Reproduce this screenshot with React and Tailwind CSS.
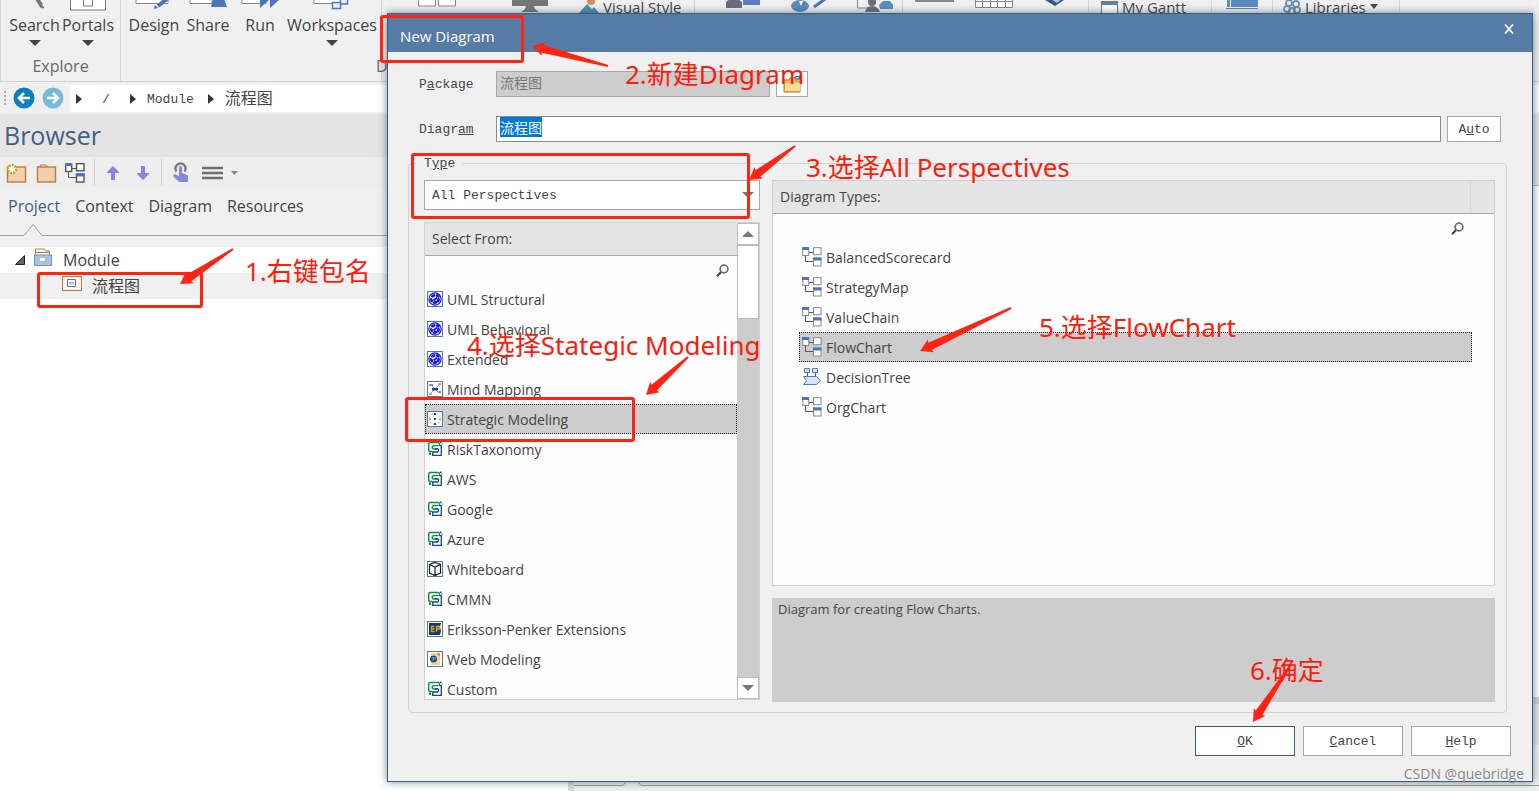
import React, { useEffect, useRef, useState } from "react";

const perspectives = [
  { name: "UML Structural", icon: "uml" },
  { name: "UML Behavioral", icon: "uml" },
  { name: "Extended", icon: "uml" },
  { name: "Mind Mapping", icon: "mind" },
  { name: "Strategic Modeling", icon: "strategic" },
  { name: "RiskTaxonomy", icon: "mdg" },
  { name: "AWS", icon: "mdg" },
  { name: "Google", icon: "mdg" },
  { name: "Azure", icon: "mdg" },
  { name: "Whiteboard", icon: "cube" },
  { name: "CMMN", icon: "mdg" },
  { name: "Eriksson-Penker Extensions", icon: "ep" },
  { name: "Web Modeling", icon: "web" },
  { name: "Custom", icon: "mdg" },
];

const diagramTypes = [
  "BalancedScorecard",
  "StrategyMap",
  "ValueChain",
  "FlowChart",
  "DecisionTree",
  "OrgChart",
];

const notes = [
  { text: "1.右键包名", place: "left-[245px] top-[253px]" },
  { text: "2.新建Diagram", place: "left-[625px] top-[56px]" },
  { text: "3.选择All Perspectives", place: "left-[806px] top-[149px]" },
  { text: "4.选择Stategic Modeling", place: "left-[467px] top-[327px]" },
  { text: "5.选择FlowChart", place: "left-[1039px] top-[309px]" },
  { text: "6.确定", place: "left-[1250px] top-[652px]" },
];

const frames = [
  "left-[37px] top-[272px] w-[166px] h-[36px]",
  "left-[380px] top-[15px] w-[144px] h-[48px]",
  "left-[411px] top-[153px] w-[339px] h-[66px]",
  "left-[405px] top-[397px] w-[230px] h-[45px]",
];

// tail x, tail y, tip x, tip y
const arrows = [
  [233, 249, 180, 284],
  [608, 66, 532, 46],
  [795, 146, 749, 180],
  [688, 357, 646, 395],
  [1011, 308, 920, 351],
  [1290, 666, 1253, 722],
];

function arrowPoints([x1, y1, x2, y2]) {
  const len = Math.hypot(x2 - x1, y2 - y1);
  const ux = (x2 - x1) / len;
  const uy = (y2 - y1) / len;
  const at = (back, side) => `${x2 - ux * back - uy * side},${y2 - uy * back + ux * side}`;
  return [
    at(len, 1),
    at(11, 4),
    at(12, 7),
    at(0, 0),
    at(12, -7),
    at(11, -4),
    at(len, -1),
  ].join(" ");
}

function Caret({ className = "" }) {
  return (
    <svg viewBox="0 0 12 6" className={`h-[6px] w-[12px] ${className}`}>
      <path d="M0 0h12L6 6z" fill="currentColor" />
    </svg>
  );
}

function SideCaret() {
  return (
    <svg viewBox="0 0 6 10" className="h-[10px] w-[6px] shrink-0">
      <path d="M0 0l6 5-6 5z" fill="#333" />
    </svg>
  );
}

function SearchIcon() {
  return (
    <svg viewBox="0 0 13 13" className="h-[13px] w-[13px] shrink-0" fill="none">
      <circle cx="8" cy="5" r="3.9" stroke="#6e6e6e" strokeWidth="1.7" />
      <path d="M5 8L1 12.2" stroke="#4a4a4a" strokeWidth="2.2" />
    </svg>
  );
}

function PerspectiveIcon({ type }) {
  const frame = <rect x="0.5" y="0.5" width="15" height="15" fill="#fff" stroke="#55779a" />;
  return (
    <svg viewBox="0 0 16 16" className="h-4 w-4 shrink-0" fill="none">
      {type === "uml" && (
        <>
          {frame}
          <circle cx="8" cy="8" r="6.1" stroke="#1414e6" strokeWidth="1.2" />
          <g fill="#1414e6">
            <ellipse cx="6.2" cy="4.8" rx="2.500" ry="1.5" transform="rotate(-25 6.2 4.8)" />
            <ellipse cx="10.8" cy="4.9" rx="1.500" ry="2.2" transform="rotate(-50 10.8 4.9)" />
            <ellipse cx="11.3" cy="9.200" rx="1.5" ry="2.4" transform="rotate(20 11.3 9.2)" />
            <ellipse cx="8" cy="11.500" rx="2.4" ry="1.500" transform="rotate(-15 8 11.5)" />
            <ellipse cx="4.500" cy="9.200" rx="1.4" ry="2.300" transform="rotate(-25 4.5 9.2)" />
            <path d="M6.500 9.500L10 6.500" stroke="#1414e6" strokeWidth="1.800" />
          </g>
        </>
      )}
      {type === "mind" && (
        <>
          {frame}
          <path d="M4 4l8 8M12 4l-8 8" stroke="#9aa7b5" />
          <path d="M2 3h4v2H2zM11 10h3v2h-3z" fill="#7d93b3" />
          <path d="M5 7h6v2.5H5z" fill="#0f4a85" />
          <path d="M11 2h3v2h-3zM2 12h3v2H2z" fill="#f3a63b" />
        </>
      )}
      {type === "strategic" && (
        <>
          {frame}
          <circle cx="8" cy="8" r="5.500" stroke="#a8b6c8" strokeDasharray="2 1" />
          <path d="M7 2h2v2H7zM7 7h2v2H7zM7 12h2v2H7z" fill="#24507f" />
          <path d="M2 7h2v2H2zM12 7h2v2h-2z" fill="#f3a63b" />
        </>
      )}
      {type === "mdg" && (
        <>
          <path d="M12.500 5V2.500l-1-1H2.700l-1 1v7l1 1H5" stroke="#0c8f43" strokeWidth="1.4" />
          <path d="M11.500 4.700H6.200l-1 1v1.300l1 1h4.600" stroke="#0c8f43" strokeWidth="1.3" />
          <path d="M2 11.500h2v2.500H2z" fill="#0c8f43" />
          <path d="M8 7.700h2.500l1 .8v1.500l-1 1H5.700v3.300h8.600V4.700h-2" stroke="#164a80" strokeWidth="1.3" />
          <path d="M13 .5h1.500v1.500H13zM14.500 2.500h1v1h-1z" fill="#164a80" />
        </>
      )}
      {type === "cube" && (
        <>
          {frame}
          <path d="M8 1.500l5.500 2v8.500L8 14.500 2.500 12V3.500zM2.500 3.500L8 6l5.500-2.500M8 6v8.500" stroke="#1c1c1c" strokeWidth="1.2" />
        </>
      )}
      {type === "ep" && (
        <>
          {frame}
          <path d="M2 2h12l-1 4 1 4-1 4H2z" fill="#0c3c70" />
          <path d="M7.500 5.500H4.500v5h3M4.500 8h3M9.500 11V5.500h3V8h-3" stroke="#f39a1c" strokeWidth="1.3" />
        </>
      )}
      {type === "web" && (
        <>
          {frame}
          <path d="M4 2h7l2 2v10H4z" fill="#fbd08d" />
          <path d="M10 2h3v3h-2z" fill="#f39a1c" />
          <circle cx="6.500" cy="8" r="3.500" fill="#1f5187" />
          <path d="M5 6.500l2 1-1 2M8 6v2" stroke="#8fb0d0" />
        </>
      )}
    </svg>
  );
}

function DiagramIcon({ dark }) {
  const line = dark ? "#555" : "#888";
  return (
    <svg viewBox="0 0 20 20" className="h-5 w-5 shrink-0" fill="none">
      <path d="M7 5.500h5M3.500 9v5.500H12" stroke="#555" />
      <g fill="#fff" stroke={line} strokeWidth={dark ? 1.4 : 1}>
        <rect x="0.7" y="1" width="6" height="7.500" />
        <rect x="11.500" y="0.7" width="7.500" height="7" />
        <rect x="11.500" y="11" width="7.500" height="8" />
      </g>
      <path d="M0 0h7v3H0zM11 10.500h8.500v3H11z" fill="#4f74c4" />
    </svg>
  );
}

function DecisionIcon() {
  return (
    <svg viewBox="0 0 20 20" className="h-5 w-5 shrink-0" fill="none">
      <path d="M5.500 5v4M13.500 5v4" stroke="#555" />
      <g fill="#dfe1fb" stroke="#5478c0">
        <path d="M2.500 1.500h5v4h-5zM10.500 1.500h5v4h-5z" />
        <path d="M1.500 9.500h13l4 4-4 4h-13l3-4z" />
      </g>
    </svg>
  );
}

function RibbonIcon({ type }) {
  return (
    <svg viewBox="0 0 40 13" className="h-[13px] w-10 shrink-0" fill="none">
      {type === "search" && <path d="M21 -3l5 8q1 2 2 1" stroke="#777" strokeWidth="4" />}
      {type === "portals" && (
        <>
          <path d="M2.500 -1v11h35V-1z" fill="#fff" stroke="#777" />
          <path d="M15.500 -1v7h9v-7" stroke="#777" />
        </>
      )}
      {type === "design" && (
        <>
          <path d="M2 -1v4.500h32V-1" fill="#fff" stroke="#888" />
          <path d="M34 -2L24 6" stroke="#4a76b8" strokeWidth="4" />
          <path d="M20 9l1-4 3 3z" fill="#4a76b8" />
        </>
      )}
      {type === "share" && (
        <>
          <path d="M2 -1v4.500h22V-1" fill="#fff" stroke="#888" />
          <path d="M25 -1h11l3 8H23z" fill="#4a76b8" />
        </>
      )}
      {type === "run" && (
        <>
          <path d="M2 -1v4.500h24V-1" fill="#fff" stroke="#888" />
          <path d="M20 0h9l-9 8zM30 0h9l-9 8z" fill="#4a76b8" />
        </>
      )}
      {type === "workspaces" && (
        <>
          <path d="M2 -1v4.500h32V-1" fill="#fff" stroke="#888" />
          <path d="M20.500 2.500h8v6h-8zM28.500 -1h7v5h-7z" fill="#e6effa" stroke="#4a76b8" strokeWidth="1.4" />
        </>
      )}
      {type === "windows" && (
        <path d="M.5 -1h17v7H.5zM20.500 -1h17v7h-17z" fill="#fff" stroke="#888" />
      )}
      {type === "monitor" && <path d="M2 0h36v6H24l1 3 4 3H11l4-3 1-3H2z" fill="#777" />}
      {type === "picture" && (
        <>
          <circle cx="22" cy="1" r="4" fill="#d58a5f" />
          <path d="M10 13l8-9 5 5 2-2 5 6z" fill="#4d93ab" />
        </>
      )}
      {type === "people" && (
        <>
          <path d="M3 8V2l4-3h8l4 3v6z" fill="#6e6a80" />
          <path d="M20 5V-1h17v6z" fill="#5b82bd" />
        </>
      )}
      {type === "edit" && (
        <>
          <ellipse cx="11" cy="6" rx="9" ry="6" fill="#5b8cb8" />
          <path d="M10 1l2 5 2-5z" fill="#fff" />
          <path d="M36 -1L25 7" stroke="#4a76b8" strokeWidth="3" />
        </>
      )}
      {type === "team" && (
        <>
          <path d="M2.500 -1v9h12" stroke="#888" />
          <circle cx="17" cy="2" r="4" fill="#6e6a80" />
          <path d="M10 12q1-6 7-6t8 6z" fill="#6e6a80" />
          <path d="M25 9l-1-4 4-4h7l3 4v4z" fill="#5b8cc0" />
        </>
      )}
      {type === "bar" && <path d="M0 1h39" stroke="#888" strokeWidth="2" />}
      {type === "calendar" && (
        <path d="M.5 -1v8.500h37V-1M.5 1.500h37M7.500 0v7M15.500 0v7M22.500 0v7M30.500 0v7" stroke="#888" fill="#fff" />
      )}
      {type === "gem" && (
        <>
          <path d="M10 0l10 6 9-6z" fill="#35577e" />
          <path d="M14 -2l8 5 5-4z" fill="#a7c4dd" />
        </>
      )}
      {type === "blue" && (
        <>
          <path d="M5 0h31v7H5z" fill="#5b8cc0" />
          <path d="M4 8.500h32" stroke="#5b8cc0" />
          <path d="M8.500 0v7" stroke="#fff" />
        </>
      )}
    </svg>
  );
}

function RibbonButton({ icon, label, menu, width }) {
  return (
    <button className={`flex flex-col items-center ${width}`}>
      <RibbonIcon type={icon} />
      <span className="text-[16px] leading-6">{label}</span>
      {menu && <Caret className="mt-[3px] text-[#444]" />}
    </button>
  );
}

function Ribbon() {
  return (
    <header className="flex h-[82px] overflow-hidden border-b border-[#d0d0d0] bg-[#f0f0f0]">
      <div className="flex w-[121px] shrink-0 flex-col border-x border-[#d4d4d4]">
        <div className="flex h-[54px] pl-[7px]">
          <RibbonButton icon="search" label="Search" menu width="w-[53px]" />
          <RibbonButton icon="portals" label="Portals" menu width="w-[54px]" />
        </div>
        <div className="text-center text-[16px] leading-6 text-[#666]">Explore</div>
      </div>
      <div className="flex w-[261px] shrink-0 flex-col border-r border-[#d4d4d4]">
        <div className="flex h-[54px] pl-[5px]">
          <RibbonButton icon="design" label="Design" width="w-[56px]" />
          <RibbonButton icon="share" label="Share" width="w-[52px]" />
          <RibbonButton icon="run" label="Run" width="w-[52px]" />
          <RibbonButton icon="workspaces" label="Workspaces" menu width="w-[92px]" />
        </div>
        <div className="pl-[255px] text-[16px] leading-6 text-[#666]">D</div>
      </div>
      <div className="flex w-[313px] shrink-0 items-start border-r border-[#d4d4d4] pl-9">
        <RibbonIcon type="windows" />
        <div className="ml-[52px] flex">
          <RibbonIcon type="monitor" />
        </div>
        <button className="ml-[19px] flex items-start">
          <RibbonIcon type="picture" />
          <span className="-ml-[6px] -mt-[5px] whitespace-nowrap text-[15px] leading-6">Visual Style</span>
        </button>
      </div>
      <div className="flex w-[208px] shrink-0 items-start gap-[26px] border-r border-[#d4d4d4] pl-7">
        <RibbonIcon type="people" />
        <RibbonIcon type="edit" />
        <RibbonIcon type="team" />
      </div>
      <div className="flex w-[186px] shrink-0 items-start gap-5 border-r border-[#d4d4d4] pl-3">
        <RibbonIcon type="bar" />
        <RibbonIcon type="calendar" />
        <RibbonIcon type="gem" />
      </div>
      <div className="w-[123px] shrink-0 border-r border-[#d4d4d4] pl-3">
        <button className="flex items-start gap-1">
          <svg viewBox="0 0 17 17" className="mt-px h-[17px] w-[17px]">
            <rect x="0.5" y="0.5" width="16" height="16" fill="#fff" stroke="#777" />
            <path d="M1 1h15v3H1z" fill="#5b82a8" />
          </svg>
          <span className="-mt-[5px] text-[15px] leading-6">My Gantt</span>
        </button>
      </div>
      <div className="flex w-[61px] shrink-0 justify-center border-r border-[#d4d4d4]">
        <RibbonIcon type="blue" />
      </div>
      <div className="w-[127px] shrink-0 border-r border-[#d4d4d4] pl-[10px]">
        <button className="flex items-start gap-1">
          <svg viewBox="0 0 18 16" className="h-4 w-[18px]" fill="none" stroke="#6f8fb0" strokeWidth="1.8">
            <circle cx="6" cy="3" r="3" />
            <circle cx="13" cy="4" r="3" />
            <circle cx="4" cy="9" r="3" />
            <circle cx="14" cy="10" r="3" />
            <circle cx="9" cy="11" r="3" />
          </svg>
          <span className="-mt-[5px] text-[15px] leading-6">Libraries</span>
          <svg viewBox="0 0 8 5" className="mt-1 h-[5px] w-2">
            <path d="M0 0h8L4 5z" fill="#444" />
          </svg>
        </button>
      </div>
    </header>
  );
}

function Breadcrumb() {
  return (
    <nav className="flex h-[33px] items-stretch border-b border-[#e5e5e5] bg-[#f0f0f0]">
      <div className="flex w-[70px] shrink-0 items-center pl-[4px]">
        <svg viewBox="0 0 2 14" className="h-[14px] w-[2px]">
          <path d="M1 0v14" stroke="#aaa" strokeWidth="2" strokeDasharray="2 2" />
        </svg>
        <button aria-label="Back" className="ml-[7px]">
          <svg viewBox="0 0 22 22" className="h-[22px] w-[22px]">
            <circle cx="11" cy="11" r="10.500" fill="#0a7fc1" />
            <path d="M17 11H6M11 6l-5 5 5 5" fill="none" stroke="#fff" strokeWidth="2.500" />
          </svg>
        </button>
        <button aria-label="Forward" className="ml-[7px]">
          <svg viewBox="0 0 22 22" className="h-[22px] w-[22px]">
            <circle cx="11" cy="11" r="10.500" fill="#79b9dc" />
            <path d="M5 11h11M11 6l5 5-5 5" fill="none" stroke="#fff" strokeWidth="2.500" />
          </svg>
        </button>
      </div>
      <div className="mb-[2px] mt-[3px] flex flex-1 items-center bg-white pl-[6px] font-['Liberation_Mono','Noto_Sans_CJK_SC',monospace] text-[13px]">
        <SideCaret />
        <span className="w-[48px] pt-[2px] text-center">/</span>
        <SideCaret />
        <a href="#module" className="ml-[11px] mr-[14px] pt-[2px]">Module</a>
        <SideCaret />
        <a href="#flow" className="ml-[11px] pt-[2px] text-[16px]">流程图</a>
      </div>
    </nav>
  );
}

function FolderIcon({ isNew }) {
  return (
    <svg viewBox="0 0 21 20" className="h-5 w-[21px]" fill="none">
      {!isNew && <path d="M3.500 5l1-3h6l1 3" fill="#fbe6d2" stroke="#b87c3c" />}
      <rect x="1.500" y="4" width="18" height="15" fill="#f4cfab" stroke="#b87c3c" strokeWidth="1.400" />
      {isNew && (
        <>
          <circle cx="6" cy="6" r="4" fill="#fff" stroke="#c4a814" strokeWidth="2.500" strokeDasharray="2 1" />
          <circle cx="6" cy="6" r="2.500" fill="#fff" />
        </>
      )}
    </svg>
  );
}

function MoveArrow({ down }) {
  return (
    <svg viewBox="0 0 12 14" className={down ? "h-[14px] w-3 rotate-180" : "h-[14px] w-3"}>
      <path d="M6 0l6 6v1H8v7H4V7H0V6z" fill="#8686de" />
    </svg>
  );
}

function Browser() {
  const tabs = ["Project", "Context", "Diagram", "Resources"];
  return (
    <aside className="flex w-[568px] shrink-0 flex-col bg-white">
      <h2 className="h-[42px] bg-[#e5e5e5] pl-[4px] text-[25px] leading-10 text-[#3e5f86]">Browser</h2>
      <div className="flex h-[31px] items-center bg-[#eeeeee] pl-[6px]">
        <button aria-label="New Model"><FolderIcon isNew /></button>
        <button aria-label="New Package" className="ml-[9px]"><FolderIcon /></button>
        <button aria-label="New Diagram" className="ml-2 mr-[9px]"><DiagramIcon dark /></button>
        <span className="h-[27px] w-px bg-[#d0d0d0]" />
        <button aria-label="Move Up" className="ml-3"><MoveArrow /></button>
        <button aria-label="Move Down" className="ml-[18px] mr-3"><MoveArrow down /></button>
        <span className="h-[27px] w-px bg-[#d0d0d0]" />
        <button aria-label="Touch" className="ml-[11px]">
          <svg viewBox="0 0 16 21" className="h-[21px] w-4" fill="none">
            <path d="M3.500 9.500A5 5 0 1 1 11.500 9.500" stroke="#777" strokeWidth="2.500" />
            <path d="M6 5q1.500-2 3 0v6l6 2.500V20H6L0 14l1.500-2L6 14z" fill="#8686de" />
          </svg>
        </button>
        <button aria-label="Options" className="ml-[13px] flex items-center gap-2 text-[#808080]">
          <svg viewBox="0 0 21 14" className="h-[14px] w-[21px]">
            <path d="M0 2h21M0 7h21M0 12h21" stroke="#707070" strokeWidth="2.400" />
          </svg>
          <svg viewBox="0 0 7 4" className="h-1 w-[7px]">
            <path d="M0 0h7L3.500 4z" fill="#888" />
          </svg>
        </button>
      </div>
      <div className="flex h-[36px] items-center gap-[15px] bg-[#f0f0f0] pl-2 text-[16px]">
        {tabs.map((tab) => (
          <button key={tab} className={tab === "Project" ? "text-[#3e5f86]" : ""}>{tab}</button>
        ))}
      </div>
      <div className="flex h-[23px] items-start bg-[#f0f0f0]">
        <span className="mt-[11px] h-px w-6 bg-[#a0a0a0]" />
        <svg viewBox="0 0 18 12" className="h-3 w-[18px]" fill="none">
          <path d="M0 11.500L9 .5l9 11" stroke="#a0a0a0" />
        </svg>
        <span className="mt-[11px] h-px flex-1 bg-[#a0a0a0]" />
      </div>
      <ul className="flex-1 text-[16px]">
        <li className="flex h-[26px] items-center pl-[15px]">
          <svg viewBox="0 0 10 10" className="h-[10px] w-[10px]">
            <path d="M9.500.5v9h-9z" fill="#666" stroke="#222" />
          </svg>
          <svg viewBox="0 0 18 18" className="mb-[6px] ml-[9px] h-[18px] w-[18px]" fill="none">
            <path d="M1.500 8V1h9l1 2h4v5" fill="#fff" stroke="#b87c3c" />
            <path d="M1.500 4.500h14" stroke="#b87c3c" />
            <rect x="0.5" y="7" width="17" height="10.500" fill="#a9c2dd" stroke="#6b95c0" />
            <path d="M6 10h5v3H6z" fill="#fff" />
          </svg>
          <span className="ml-[11px]">Module</span>
        </li>
        <li className="flex h-[26px] items-center bg-[#f0f0f0] pl-[62px]">
          <svg viewBox="0 0 20 15" className="mb-[5px] h-[15px] w-5" fill="none">
            <rect x="0.5" y="0.5" width="19" height="14" fill="#fdf3e8" stroke="#b87c3c" />
            <path d="M5.500 3.500h8v7h-8zM7 7h5" fill="#fff" stroke="#4f74c4" />
          </svg>
          <span className="ml-[10px]">流程图</span>
        </li>
      </ul>
    </aside>
  );
}

function Workspace() {
  return (
    <main className="flex min-w-0 flex-1 flex-col bg-[#f0f0f0]">
      <div className="h-[71px] shrink-0 border-b border-[#c0c0c0] bg-[#e5e5e5]" />
      <div className="min-h-[511px] flex-1 bg-white" />
      <div className="h-[7px] shrink-0 bg-[#d0d0d0]" />
      <div className="h-[41px] shrink-0 bg-[#e5e5e5]" />
      <div className="flex h-[46px] shrink-0 items-end pb-[5px]">
        <span className="h-px w-[49px] bg-[#999]" />
        <svg viewBox="0 0 18 12" className="h-3 w-[18px]" fill="none">
          <path d="M0 11.500L9 .5l9 11" stroke="#999" />
        </svg>
        <span className="h-px flex-1 bg-[#999]" />
      </div>
    </main>
  );
}

function PerspectiveList() {
  const [selected, setSelected] = useState("Strategic Modeling");
  return (
    <div className="flex h-[478px] border border-[#d0d0d0] bg-[#fdfdfd]">
      <div className="flex min-w-0 flex-1 flex-col overflow-hidden">
        <div className="h-[33px] shrink-0 border-b border-[#a8a8a8] bg-[#e5e5e5] pl-[7px] text-[14px] leading-8">
          Select From:
        </div>
        <label className="flex h-[28px] shrink-0 items-center pr-2">
          <input aria-label="Search perspectives" className="h-full min-w-0 flex-1 bg-transparent px-2 text-[14px] outline-none" />
          <SearchIcon />
        </label>
        <ul role="listbox" aria-label="Select From">
          {perspectives.map((item) => (
            <li
              key={item.name}
              role="option"
              aria-selected={item.name === selected}
              onClick={() => setSelected(item.name)}
              className={`flex h-[30px] items-center gap-1 border border-dotted pl-px text-[14px] ${
                item.name === selected ? "border-[#222] bg-[#cdcdcd]" : "border-transparent"
              }`}
            >
              <PerspectiveIcon type={item.icon} />
              {item.name}
            </li>
          ))}
        </ul>
      </div>
      <div className="flex w-[22px] shrink-0 flex-col bg-[#cdcdcd] text-[#777]">
        <button aria-label="Scroll up" className="flex h-[22px] w-full items-center justify-center border border-[#bcbcbc] bg-white">
          <Caret className="rotate-180" />
        </button>
        <div className="h-[74px] border border-[#bcbcbc] bg-white" />
        <button aria-label="Scroll down" className="mt-auto flex h-[22px] w-full items-center justify-center border border-[#bcbcbc] bg-white">
          <Caret />
        </button>
      </div>
    </div>
  );
}

function TypeList() {
  const [selected, setSelected] = useState("FlowChart");
  return (
    <div className="flex min-w-0 flex-1 flex-col">
      <div className="flex flex-1 flex-col border border-[#d0d0d0] bg-[#fdfdfd]">
        <div className="flex h-[33px] border-b border-[#a8a8a8] bg-[#e5e5e5] pl-[7px] text-[14px] leading-8">
          <span className="flex-1 border-r border-[#d8d8d8]">Diagram Types:</span>
          <span className="w-[23px]" />
        </div>
        <label className="flex h-[28px] items-center pr-[30px]">
          <input aria-label="Search diagram types" className="h-full min-w-0 flex-1 bg-transparent px-2 text-[14px] outline-none" />
          <SearchIcon />
        </label>
        <ul role="listbox" aria-label="Diagram Types" className="ml-[26px] mr-[22px]">
          {diagramTypes.map((name) => (
            <li
              key={name}
              role="option"
              aria-selected={name === selected}
              onClick={() => setSelected(name)}
              className={`flex h-[30px] items-center gap-1 border border-dotted pl-[2px] text-[14px] ${
                name === selected ? "border-[#222] bg-[#cdcdcd]" : "border-transparent"
              }`}
            >
              {name === "DecisionTree" ? <DecisionIcon /> : <DiagramIcon />}
              {name}
            </li>
          ))}
        </ul>
      </div>
      <p className="mt-3 h-[104px] bg-[#cdcdcd] px-[6px] pt-[2px] text-[13px] leading-[18px]">
        Diagram for creating Flow Charts.
      </p>
    </div>
  );
}

function NewDiagramDialog() {
  const nameRef = useRef(null);

  useEffect(() => {
    nameRef.current.focus();
    nameRef.current.select();
  }, []);

  return (
    <section
      role="dialog"
      aria-labelledby="dialog-title"
      className="absolute bottom-[9px] left-[387px] right-[6px] top-[13px] flex flex-col border border-[#3d5a78] bg-[#f0f0f0] font-['Liberation_Mono','Noto_Sans_CJK_SC',monospace] text-[13px] shadow-[0_0_8px_rgba(30,60,90,0.6)]"
    >
      <div className="flex h-[38px] shrink-0 items-start justify-between bg-[#567ba5] pl-3 pr-[18px] font-['Open_Sans','Noto_Sans_CJK_SC',sans-serif] text-white">
        <h1 id="dialog-title" className="pt-[10px] text-[15px] leading-6">New Diagram</h1>
        <button aria-label="Close" className="pt-[10px]">
          <svg viewBox="0 0 10 10" className="h-[10px] w-[10px]">
            <path d="M1 .5l8 9M9 .5l-8 9" stroke="#fff" strokeWidth="1.700" />
          </svg>
        </button>
      </div>

      <div className="mt-[19px] flex h-[26px] items-center pl-[31px]">
        <label htmlFor="package" className="w-[77px] pt-[2px]">P<u>a</u>ckage</label>
        <input
          id="package"
          readOnly
          value="流程图"
          className="h-full w-[274px] border border-[#a8a8a8] bg-[#cdcdcd] px-[3px] pb-1 text-[14px] leading-[18px] text-[#777] outline-none"
        />
        <button aria-label="Select package" className="ml-[6px] flex h-full w-8 items-center justify-center border border-[#a8a8a8] bg-white">
          <svg viewBox="0 0 20 20" className="h-5 w-5" fill="none">
            <path d="M2 6h5l1-2h6v3h4v11H2z" fill="#e9bd62" stroke="#a97a2c" />
            <path d="M3 9h15v8H3z" fill="#f8dc8e" />
            <path d="M12 4q3-3 6 0M18 1v4h-4" stroke="#4f74a4" strokeWidth="1.400" />
          </svg>
        </button>
      </div>

      <div className="mt-[19px] flex h-[26px] items-center pl-[31px] pr-[31px]">
        <label htmlFor="diagram" className="w-[77px] pt-[2px]">Diagr<u>am</u></label>
        <input
          id="diagram"
          ref={nameRef}
          defaultValue="流程图"
          className="h-full min-w-0 flex-1 border border-[#8c8c8c] bg-white px-[3px] pb-1 text-[14px] leading-[18px] outline-none selection:bg-[#0078d7] selection:text-white"
        />
        <button className="ml-[6px] h-full w-[54px] border border-[#a8a8a8] bg-white pt-[2px]">A<u>u</u>to</button>
      </div>

      <fieldset className="ml-5 mr-[25px] mt-3 rounded border border-[#d0d0d0] pb-[10px] pl-[15px] pr-[11px]">
        <legend className="-ml-2 px-2 pt-[2px] leading-4">T<u>yp</u>e</legend>
        <div className="flex gap-3 pt-2">
          <div className="w-[336px] shrink-0 pb-[2px]">
            <div className="relative">
              <select
                aria-label="Type"
                className="block h-[30px] w-full appearance-none rounded-none border border-[#a8a8a8] bg-white pl-[7px] pt-[2px] outline-none"
              >
                <option>All Perspectives</option>
              </select>
              <Caret className="pointer-events-none absolute right-[6px] top-3 text-[#777]" />
            </div>
            <div className="mt-3 font-['Open_Sans','Noto_Sans_CJK_SC',sans-serif]">
              <PerspectiveList />
            </div>
          </div>
          <div className="flex min-w-0 flex-1 font-['Open_Sans','Noto_Sans_CJK_SC',sans-serif]">
            <TypeList />
          </div>
        </div>
      </fieldset>

      <div className="mt-[13px] flex justify-end gap-2 pr-[21px]">
        <button className="h-[30px] w-[100px] border border-[#3d5a78] bg-white pt-[2px]"><u>O</u>K</button>
        <button className="h-[30px] w-[100px] border border-[#a8a8a8] bg-white pt-[2px]"><u>C</u>ancel</button>
        <button className="h-[30px] w-[100px] border border-[#a8a8a8] bg-white pt-[2px]"><u>H</u>elp</button>
      </div>
    </section>
  );
}

function Annotations() {
  return (
    <div className="pointer-events-none absolute inset-0 overflow-hidden">
      {frames.map((frame) => (
        <div key={frame} className={`absolute rounded-[3px] border-3 border-[#ff2314] ${frame}`} />
      ))}
      <svg className="absolute inset-0 h-full w-full">
        {arrows.map((arrow) => (
          <polygon key={arrow.join()} points={arrowPoints(arrow)} fill="#ff2314" />
        ))}
      </svg>
      {notes.map((note) => (
        <span
          key={note.text}
          className={`absolute whitespace-nowrap font-['Noto_Sans','Noto_Sans_CJK_SC',sans-serif] text-[26px] leading-9 text-[#ff1b0c] ${note.place}`}
        >
          {note.text}
        </span>
      ))}
      <span className="absolute bottom-[7px] right-[15px] text-[14px] leading-5 text-[#888]">CSDN @quebridge</span>
    </div>
  );
}

function App() {
  return (
    <div className="relative flex min-h-screen flex-col overflow-hidden bg-[#f0f0f0] font-['Open_Sans','Noto_Sans_CJK_SC',sans-serif] text-[#444]">
      <Ribbon />
      <Breadcrumb />
      <div className="flex flex-1">
        <Browser />
        <div className="w-[6px] shrink-0 bg-[#dcdcdc]" />
        <Workspace />
      </div>
      <NewDiagramDialog />
      <Annotations />
    </div>
  );
}

export default App;
